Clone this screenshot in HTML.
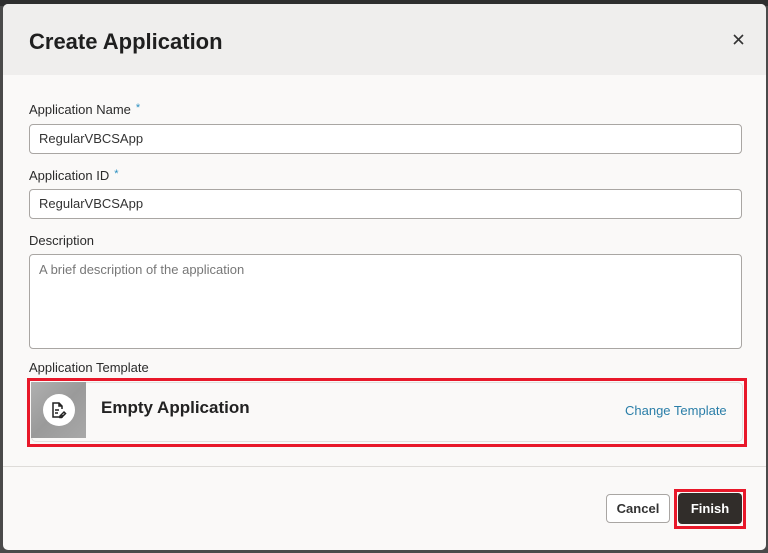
<!DOCTYPE html><html><head><style>
*{box-sizing:border-box;margin:0;padding:0}
body{width:768px;height:553px;background:#4a4a4a;font-family:"Liberation Sans",sans-serif;position:relative;overflow:hidden}
.top{position:absolute;left:0;top:0;width:768px;height:6px;background:#2e2e2e}
.dlg{position:absolute;left:3px;top:4px;width:763px;height:546px;background:#faf9f8;border-radius:5px;overflow:hidden}
.hdr{height:71px;background:#efeeed;position:relative}
.hdr h1{position:absolute;left:26px;top:25px;font-size:22px;font-weight:bold;color:#1f1f1f}
.lbl{position:absolute;left:26px;font-size:13px;color:#2b2b2b}
.lbl b{color:#2a8fc0;font-weight:normal;font-size:11px;vertical-align:top;margin-left:5px}
.in{position:absolute;left:26px;width:713px;background:#fff;border:1px solid #a9a6a3;border-radius:4px;font-size:13px;color:#333;padding:0 9px}
.red{position:absolute;border:3px solid #e8182a}
</style></head><body><div class="top"></div>
<div class="dlg">
<div class="hdr"><h1>Create Application</h1>
<svg style="position:absolute;left:730px;top:30px" width="11" height="11" viewBox="0 0 11 11" stroke="#333" stroke-width="1.6"><path d="M1 1l9 9M10 1l-9 9"/></svg></div>
<div class="lbl" style="top:98px">Application Name<b>*</b></div>
<div class="in" style="top:120px;height:30px;line-height:28px">RegularVBCSApp</div>
<div class="lbl" style="top:164px">Application ID<b>*</b></div>
<div class="in" style="top:185px;height:30px;line-height:28px">RegularVBCSApp</div>
<div class="lbl" style="top:229px">Description</div>
<div class="in" style="top:250px;height:95px;padding-top:7px;color:#777">A brief description of the application</div>
<div class="lbl" style="top:356px">Application Template</div>
<div style="position:absolute;left:28px;top:378px;width:712px;height:60px;background:#faf9f8;border:1px solid #e2e0dd;border-radius:5px"></div>
<div style="position:absolute;left:28px;top:378px;width:55px;height:56px;background:linear-gradient(135deg,#b0b0b0,#9a9a9a 50%,#a8a8a8)"></div>
<div style="position:absolute;left:40px;top:390px;width:32px;height:32px;border-radius:50%;background:#fff">
<svg width="32" height="32" viewBox="0 0 32 32" fill="none" stroke="#222" stroke-width="1.5"><path d="M19 21v2h-9V9h6l3 3v3M16 9v3h3M12 16h4M12 19h3"/><path d="M17 22l4-4 1.5 1.5-4 4H17z"/></svg></div>
<div style="position:absolute;left:98px;top:394px;font-size:17px;font-weight:bold;color:#222">Empty Application</div>
<div style="position:absolute;left:622px;top:399px;font-size:13px;color:#2a7ea8">Change Template</div>
<div class="red" style="left:24px;top:374px;width:720px;height:69px"></div>
<div style="position:absolute;left:0;top:462px;width:763px;height:1px;background:#dedcd9"></div>
<div style="position:absolute;left:603px;top:490px;width:64px;height:29px;border:1px solid #a9a6a3;border-radius:4px;background:#fff;font-size:13px;font-weight:bold;color:#333;text-align:center;line-height:27px">Cancel</div>
<div style="position:absolute;left:675px;top:489px;width:64px;height:31px;border-radius:4px;background:#312d2a;font-size:13px;font-weight:bold;color:#fff;text-align:center;line-height:31px">Finish</div>
<div class="red" style="left:671px;top:485px;width:72px;height:40px"></div>
</div></body></html>
